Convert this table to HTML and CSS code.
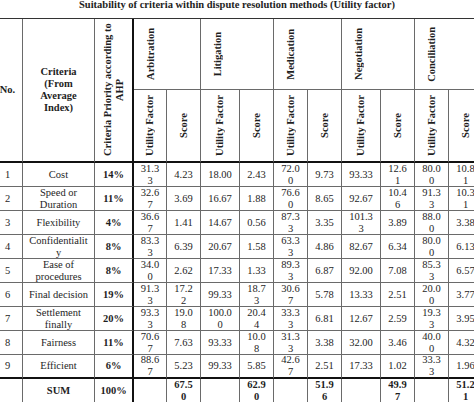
FILE: index.html
```html
<!DOCTYPE html>
<html lang="en">
<head>
<meta charset="utf-8">
<title>Suitability of criteria</title>
<link rel="stylesheet" href="styles.css">
</head>
<body>
<div class="page">
  <div class="title">Suitability of criteria within dispute resolution methods (Utility factor)</div>
  <div class="table">
    <div class="c b hd span-r">No.</div>
    <div class="c b hd span-r">Criteria<br>(From<br>Average<br>Index)</div>
    <div class="c b hd span-r thick-r"><span class="v prio">Criteria Priority according to AHP</span></div>
    <div class="c b grp span-c"><span class="v">Arbitration</span></div>
    <div class="c b grp span-c"><span class="v">Litigation</span></div>
    <div class="c b grp span-c"><span class="v">Medication</span></div>
    <div class="c b grp span-c"><span class="v">Negotiation</span></div>
    <div class="c b grp span-c"><span class="v">Conciliation</span></div>
    <div class="c b hd"><span class="v">Utility Factor</span></div>
    <div class="c b hd"><span class="v">Score</span></div>
    <div class="c b hd"><span class="v">Utility Factor</span></div>
    <div class="c b hd"><span class="v">Score</span></div>
    <div class="c b hd"><span class="v">Utility Factor</span></div>
    <div class="c b hd"><span class="v">Score</span></div>
    <div class="c b hd"><span class="v">Utility Factor</span></div>
    <div class="c b hd"><span class="v">Score</span></div>
    <div class="c b hd"><span class="v">Utility Factor</span></div>
    <div class="c b hd"><span class="v">Score</span></div>

    <div class="c">1</div><div class="c crit">Cost</div><div class="c b pct">14%</div>
    <div class="c">31.33</div><div class="c">4.23</div><div class="c">18.00</div><div class="c">2.43</div><div class="c">72.00</div><div class="c">9.73</div><div class="c">93.33</div><div class="c">12.61</div><div class="c">80.00</div><div class="c">10.81</div>

    <div class="c">2</div><div class="c crit">Speed or Duration</div><div class="c b pct">11%</div>
    <div class="c">32.67</div><div class="c">3.69</div><div class="c">16.67</div><div class="c">1.88</div><div class="c">76.60</div><div class="c">8.65</div><div class="c">92.67</div><div class="c">10.46</div><div class="c">91.33</div><div class="c">10.31</div>

    <div class="c">3</div><div class="c crit">Flexibility</div><div class="c b pct">4%</div>
    <div class="c">36.67</div><div class="c">1.41</div><div class="c">14.67</div><div class="c">0.56</div><div class="c">87.33</div><div class="c">3.35</div><div class="c">101.33</div><div class="c">3.89</div><div class="c">88.00</div><div class="c">3.38</div>

    <div class="c">4</div><div class="c crit">Confidentiality</div><div class="c b pct">8%</div>
    <div class="c">83.33</div><div class="c">6.39</div><div class="c">20.67</div><div class="c">1.58</div><div class="c">63.33</div><div class="c">4.86</div><div class="c">82.67</div><div class="c">6.34</div><div class="c">80.00</div><div class="c">6.13</div>

    <div class="c">5</div><div class="c crit">Ease of procedures</div><div class="c b pct">8%</div>
    <div class="c">34.00</div><div class="c">2.62</div><div class="c">17.33</div><div class="c">1.33</div><div class="c">89.33</div><div class="c">6.87</div><div class="c">92.00</div><div class="c">7.08</div><div class="c">85.33</div><div class="c">6.57</div>

    <div class="c">6</div><div class="c crit">Final decision</div><div class="c b pct">19%</div>
    <div class="c">91.33</div><div class="c">17.22</div><div class="c">99.33</div><div class="c">18.73</div><div class="c">30.67</div><div class="c">5.78</div><div class="c">13.33</div><div class="c">2.51</div><div class="c">20.00</div><div class="c">3.77</div>

    <div class="c">7</div><div class="c crit">Settlement finally</div><div class="c b pct">20%</div>
    <div class="c">93.33</div><div class="c">19.08</div><div class="c">100.00</div><div class="c">20.44</div><div class="c">33.33</div><div class="c">6.81</div><div class="c">12.67</div><div class="c">2.59</div><div class="c">19.33</div><div class="c">3.95</div>

    <div class="c">8</div><div class="c crit">Fairness</div><div class="c b pct">11%</div>
    <div class="c">70.67</div><div class="c">7.63</div><div class="c">93.33</div><div class="c">10.08</div><div class="c">31.33</div><div class="c">3.38</div><div class="c">32.00</div><div class="c">3.46</div><div class="c">40.00</div><div class="c">4.32</div>

    <div class="c last">9</div><div class="c crit last">Efficient</div><div class="c b pct last">6%</div>
    <div class="c last">88.67</div><div class="c last">5.23</div><div class="c last">99.33</div><div class="c last">5.85</div><div class="c last">42.67</div><div class="c last">2.51</div><div class="c last">17.33</div><div class="c last">1.02</div><div class="c last">33.33</div><div class="c last">1.96</div>

    <div class="c"></div><div class="c b crit">SUM</div><div class="c b pct">100%</div>
    <div class="c"></div><div class="c b">67.50</div><div class="c"></div><div class="c b">62.90</div><div class="c"></div><div class="c b">51.96</div><div class="c"></div><div class="c b">49.97</div><div class="c"></div><div class="c b">51.21</div>
  </div>
</div>
</body>
</html>
```
FILE: styles.css
```css
html, body {
  margin: 0;
  padding: 0;
  background: #ffffff;
  overflow: hidden;
}

.page {
  width: 474px;
  height: 402px;
  overflow: hidden;
  font-family: "Liberation Serif", "Times New Roman", serif;
  font-size: 10.5px;
  color: #1e1e1e;
}

.title {
  height: 18px;
  line-height: 9px;
  font-weight: bold;
  text-align: center;
  white-space: nowrap;
}

.table {
  display: grid;
  grid-template-columns: 30px 72px 39px 33px 34px 39px 34px 34px 34px 39px 34px 34px 34px;
  grid-template-rows: 71px 73px repeat(10, 24px);
  margin-left: -7px;
  width: max-content;
  border-top: 1px solid #333;
}

.c {
  box-sizing: border-box;
  display: flex;
  align-items: center;
  justify-content: center;
  text-align: center;
  line-height: 12px;
  padding: 0 6px;
  border-right: 1px solid #6a6a6a;
  border-bottom: 1px solid #6a6a6a;
  overflow-wrap: anywhere;
}

.crit {
  padding: 0 5px;
}

.b {
  font-weight: bold;
}

.span-r {
  grid-row: span 2;
  border-bottom: 2px solid #111;
}

.span-c {
  grid-column: span 2;
}

.hd {
  padding: 0;
}

.table > .hd:not(.span-r) {
  border-bottom: 2px solid #111;
}

.thick-r,
.pct {
  border-right: 2px solid #111;
}

.pct {
  padding: 0 1px;
}

.last {
  border-bottom: 2px solid #111;
}

.grp {
  justify-content: flex-start;
  padding: 0 0 0 11px;
}

.v {
  writing-mode: vertical-rl;
  transform: rotate(180deg);
  white-space: nowrap;
  line-height: 12px;
}

.prio {
  white-space: normal;
  height: 136px;
  text-align: center;
}
```
